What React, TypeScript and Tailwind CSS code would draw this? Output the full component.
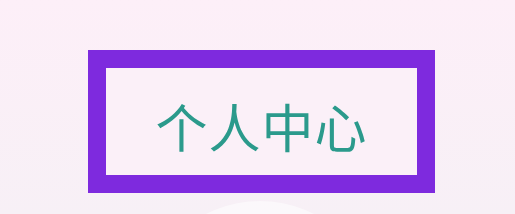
import React from 'react';

// ─── Component ────────────────────────────────────────────────────────────────

const App: React.FC = () => {
    return (
        <div className="relative h-[214px] w-[515px] overflow-hidden bg-gradient-to-b from-[#fdeff8] to-[#f7f0f6] font-['Noto_Sans_CJK_SC',sans-serif]">
            {/* Faint glow at the bottom */}
            <div className="absolute left-[141px] top-[201px] h-[238px] w-[238px] rounded-full bg-white/50" />

            <div className="relative flex justify-center pt-[50px] pl-[8px]">
                <div className="flex h-[143px] w-[347px] items-center justify-center border-[18px] border-[#7e2ade] bg-[#fbf0f8]">
                    <span className="pt-[8px] text-[52px] leading-none tracking-[1px] text-[#2b9a8c]">个人中心</span>
                </div>
            </div>
        </div>
    );
};

export default App;
